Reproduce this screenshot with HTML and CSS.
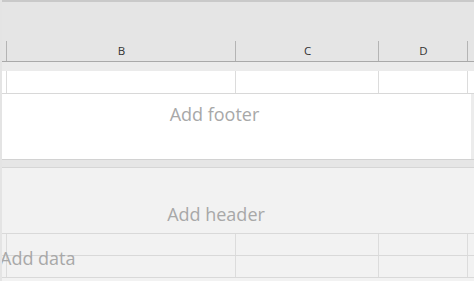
FILE: index.html
```html
<!DOCTYPE html>
<html>
<head>
<meta charset="utf-8">
<link rel="stylesheet" href="styles.css">
</head>
<body>
<div class="page">
  <div class="topband"></div>
  <div class="colhead">
    <div class="hcell gutter"></div>
    <div class="hcell colb">B</div>
    <div class="hcell colc">C</div>
    <div class="hcell cold">D</div>
    <div class="hcell tail"></div>
  </div>
  <div class="gapband"></div>
  <div class="datarow">
    <div class="cell gutter"></div>
    <div class="cell colb"></div>
    <div class="cell colc"></div>
    <div class="cell cold"></div>
    <div class="cell tail"></div>
  </div>
  <div class="footer"><span class="hint">Add footer</span></div>
  <div class="pagebreak"></div>
  <div class="nextpage">
    <div class="header"><span class="hint">Add header</span></div>
    <div class="grid">
      <div class="grow">
        <div class="cell gutter"></div>
        <div class="cell colb"></div>
        <div class="cell colc"></div>
        <div class="cell cold"></div>
        <div class="cell tail"></div>
      </div>
      <div class="grow">
        <div class="cell gutter"></div>
        <div class="cell colb"></div>
        <div class="cell colc"></div>
        <div class="cell cold"></div>
        <div class="cell tail"></div>
      </div>
      <span class="hint adddata">Add data</span>
    </div>
  </div>
</div>
</body>
</html>
```

FILE: styles.css
```css
* { box-sizing: border-box; }
html, body { margin: 0; padding: 0; }
body {
  background: #f2f2f2;
  font-family: "Open Sans", "Noto Sans", sans-serif;
  width: 474px;
  height: 281px;
  overflow: hidden;
}
.page {
  width: 474px;
  height: 281px;
  display: flex;
  flex-direction: column;
  border-left: 2px solid #e4e4e4;
  overflow: hidden;
}
.topband {
  height: 2px;
  background: #c9c9c9;
  margin-left: -2px;
}
.colhead {
  height: 60px;
  background: #e5e5e5;
  border-bottom: 1px solid #a9a9a9;
  display: flex;
}
.gutter { width: 5px; }
.colb { width: 229px; }
.colc { width: 143px; }
.cold { width: 89px; }
.tail { flex: 1; }
.hcell {
  position: relative;
  display: flex;
  align-items: flex-end;
  justify-content: center;
  padding-bottom: 3px;
  font-size: 11.5px;
  color: #333333;
  line-height: 14px;
}
.hcell.gutter::after,
.hcell.colb::after,
.hcell.colc::after,
.hcell.cold::after {
  content: "";
  position: absolute;
  right: 0;
  bottom: 0;
  width: 1px;
  height: 20px;
  background: #b4b4b4;
}
.gapband {
  height: 9px;
  background: #ebebeb;
  margin-left: -2px;
}
.datarow {
  height: 23px;
  background: #ffffff;
  display: flex;
  border-bottom: 1px solid #d8d8d8;
}
.cell {
  height: 100%;
}
.datarow .gutter,
.datarow .colb,
.datarow .colc,
.datarow .cold {
  border-right: 1px solid #dcdcdc;
}
.footer {
  height: 65px;
  background: #ffffff;
  border-right: 3px solid #ececec;
  display: flex;
  justify-content: center;
  padding-top: 8px;
  padding-right: 44px;
}
.hint {
  font-size: 18px;
  color: #a8a8a8;
  line-height: 24px;
}
.pagebreak {
  height: 9px;
  background: #e6e6e6;
  border-top: 1px solid #d2d2d2;
  border-bottom: 1px solid #d6d6d6;
  margin-left: -2px;
}
.nextpage {
  flex: 1;
  background: #f2f2f2;
  display: flex;
  flex-direction: column;
}
.header {
  height: 65px;
  display: flex;
  justify-content: center;
  padding-top: 34px;
  padding-right: 44px;
}
.grid {
  position: relative;
  border-top: 1px solid #d9d9d9;
  margin-left: -2px;
  padding-left: 2px;
}
.grow {
  height: 22px;
  display: flex;
  border-bottom: 1px solid #d9d9d9;
}
.grow .gutter,
.grow .colb,
.grow .colc,
.grow .cold {
  border-right: 1px solid #dcdcdc;
}
.adddata {
  position: absolute;
  left: 0;
  top: 12px;
}
```
